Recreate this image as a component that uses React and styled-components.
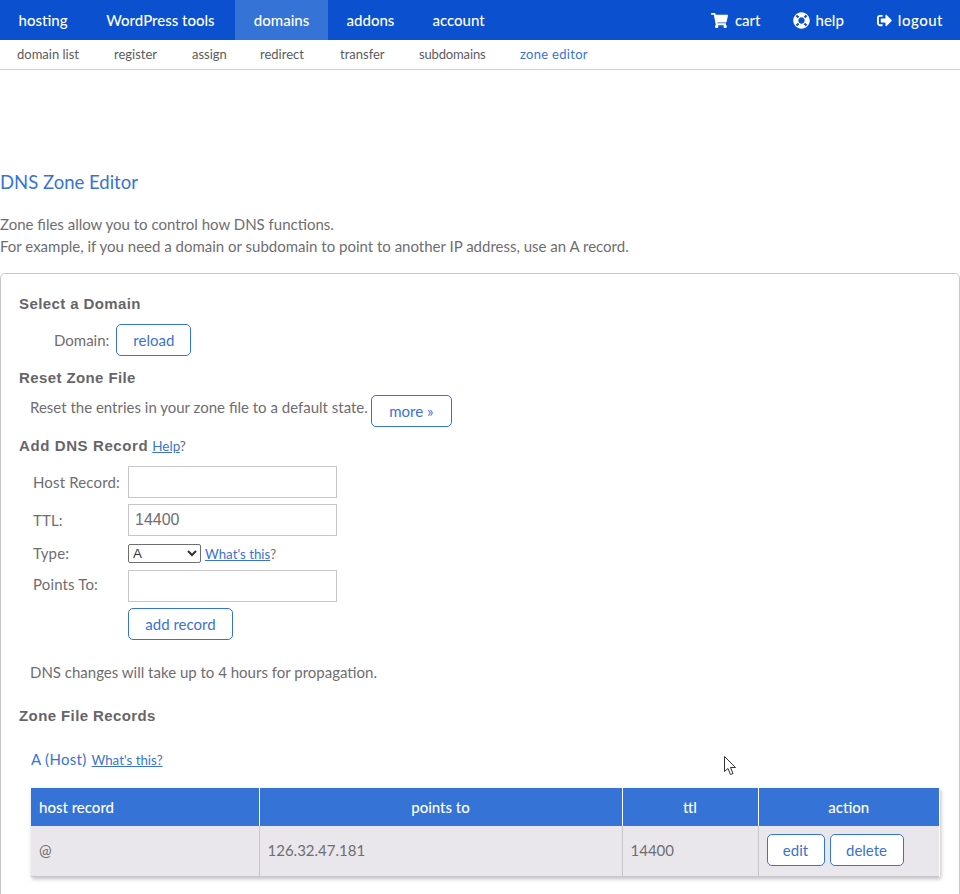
import React from "react";
import styled, { createGlobalStyle } from "styled-components";
import { FaShoppingCart, FaLifeRing, FaSignOutAlt } from "react-icons/fa";

const Global = createGlobalStyle`
  html, body { margin: 0; padding: 0; background: #fff; }
  body { font-family: Lato, "Open Sans", sans-serif; color: #6f6d72; font-size: 15px; overflow: hidden; }
  #root { height: 894px; overflow: hidden; }
`;

const TopBar = styled.nav`
  display: flex; justify-content: space-between; height: 40px; background: #0b50cf;
`;
const NavGroup = styled.div`display: flex;`;
const NavItem = styled.a`
  display: flex; align-items: center; justify-content: center; width: ${p => p.$w}px; height: 40px;
  color: #fff; font-size: 15px; font-weight: 500;
  background: ${p => (p.$active ? "#3673d6" : "transparent")};
`;
const ToolItem = styled.a`
  display: flex; align-items: center; gap: ${p => p.$gap}px; height: 40px; padding: 0 ${p => p.$pad}px;
  color: #fff; font-size: 15px; font-weight: 500; letter-spacing: ${p => p.$track || 0}px;
`;
const SubBar = styled.nav`
  display: flex; box-sizing: content-box; height: 27px; padding: 0 0 2px 17px; border-bottom: 1px solid #cfcfcf; gap: 35px; align-items: center;
`;
const SubItem = styled.a`
  width: ${p => p.$w}px; white-space: nowrap; font-size: 13px; letter-spacing: ${p => p.$track || 0}px;
  color: ${p => (p.$active ? "#3a72d4" : "#5c5a5f")};
`;
const Title = styled.h1`
  margin: 100px 0 0; font-size: 18.5px; line-height: 24px; font-weight: 400; color: #3673d6;
`;
const Intro = styled.p`
  margin: 19px 0 0; font-size: 15px; line-height: 22px;
`;
const Panel = styled.section`
  margin-top: 16px; border: 1px solid #c8c6cc; border-radius: 5px; padding: 20px 19px 24px 18px;
`;
const Heading = styled.h2`
  margin: 0; font-family: "Liberation Sans", Arial, sans-serif; font-size: 15px; line-height: 20px; font-weight: 700; color: #67656a;
  letter-spacing: 0.4px;
`;
const DomainRow = styled.div`
  display: flex; align-items: center; gap: 7px; margin: 10px 0 12px 35px;
`;
const OutlineButton = styled.button`
  height: 32px; padding: 0; width: ${p => p.$w}px; background: #fff;
  border: 1px solid #3673d6; border-radius: 5px; color: #3a72d4; cursor: pointer;
  font-family: inherit; font-size: 15px;
`;
const ResetRow = styled.div`
  display: flex; align-items: flex-start; gap: 3px; margin: 7px 0 0 11px; line-height: 20px;
  & > span { padding-top: 2px; }
`;
const AddHeading = styled(Heading)`
  margin-top: 9px; display: flex; align-items: baseline; gap: 4px; letter-spacing: 0.6px;
`;
const HelpNote = styled.span`
  font-family: Lato, sans-serif; font-weight: 400; font-size: 13.5px; letter-spacing: 0;
`;
const TextLink = styled.a`
  color: #3a72d4; text-decoration: underline;
`;
const FormGrid = styled.div`
  display: grid; grid-template-columns: 95px 209px; align-items: center; row-gap: 6px; margin: 10px 0 0 14px;
`;
const Label = styled.label`
  line-height: 20px; letter-spacing: 0.15px; ${p => p.$up && "margin-top: -4px;"}
`;
const TextInput = styled.input`
  box-sizing: border-box; width: 209px; height: 32px; border: 1px solid #c8c6cc; padding: 0 6px;
  font-family: "Liberation Sans", Arial, sans-serif; font-size: 16px; color: #6f6d72; outline: none;
`;
const TypeCell = styled.div`
  display: flex; align-items: center; gap: 4px; white-space: nowrap; font-size: 13.3px; padding: 2px 0 1px;
`;
const TypeSelect = styled.select`
  width: 73px; height: 19px; font-family: "Liberation Sans", Arial, sans-serif; font-size: 13.33px; color: #333;
  background: #fff; border: 1px solid #6f6f6f; border-radius: 2px; padding: 0;
`;
const Note = styled.p`
  margin: 22px 0 0 11px; line-height: 20px;
`;
const RecordsHeading = styled(Heading)`margin-top: 24px;`;
const Kind = styled.div`
  margin: 23px 0 0 12px; line-height: 20px; color: #3673d6; display: flex; gap: 5px; align-items: baseline;
  letter-spacing: 0.3px;
`;
const SmallLink = styled(TextLink)`font-size: 13.3px; letter-spacing: 0;`;
const TableWrap = styled.div`
  margin: 18px 0 0 12px; box-shadow: 1px 2px 4px rgba(0,0,0,0.25);
`;
const Table = styled.table`
  width: 908px; border-collapse: collapse; table-layout: fixed; background: #e9e7eb;
`;
const Th = styled.th`
  height: 38px; padding: 0 8px; background: #3673d6; color: #fff; font-size: 15px; font-weight: 500;
  text-align: ${p => p.$left ? "left" : "center"};
  border-left: ${p => p.$first ? "none" : "1px solid #fff"};
`;
const Td = styled.td`
  height: 50px; padding: 0 8px 1px; font-size: 15px; border-left: ${p => p.$first ? "none" : "1px solid #c8c6cc"};
  border-bottom: 1px solid #c8c6cc; box-sizing: border-box;
`;
const Actions = styled.div`display: flex; gap: 5px; margin-bottom: 1px;`;
const Pointer = styled.svg`
  position: absolute; left: 724px; top: 756px;
`;

export default function App() {
  return (
    <>
      <Global />
      <TopBar>
        <NavGroup>
          <NavItem $w={86}>hosting</NavItem>
          <NavItem $w={149}>WordPress tools</NavItem>
          <NavItem $w={93} $active>domains</NavItem>
          <NavItem $w={85}>addons</NavItem>
          <NavItem $w={91}>account</NavItem>
        </NavGroup>
        <NavGroup>
          <ToolItem $gap={7} $pad={16}><FaShoppingCart size={17} />cart</ToolItem>
          <ToolItem $gap={6} $pad={16}><FaLifeRing size={17} />help</ToolItem>
          <ToolItem $gap={6} $pad={17} $track={0.5}><FaSignOutAlt size={15} />logout</ToolItem>
        </NavGroup>
      </TopBar>
      <SubBar>
        <SubItem $w={62}>domain list</SubItem>
        <SubItem $w={43}>register</SubItem>
        <SubItem $w={33}>assign</SubItem>
        <SubItem $w={45}>redirect</SubItem>
        <SubItem $w={44}>transfer</SubItem>
        <SubItem $w={66} $track={-0.15}>subdomains</SubItem>
        <SubItem $w={67} $track={0.3} $active>zone editor</SubItem>
      </SubBar>
      <Title>DNS Zone Editor</Title>
      <Intro>
        Zone files allow you to control how DNS functions.<br />
        For example, if you need a domain or subdomain to point to another IP address, use an A record.
      </Intro>
      <Panel>
        <Heading>Select a Domain</Heading>
        <DomainRow>
          <span>Domain:</span>
          <OutlineButton $w={75}>reload</OutlineButton>
        </DomainRow>
        <Heading>Reset Zone File</Heading>
        <ResetRow>
          <span>Reset the entries in your zone file to a default state.</span>
          <OutlineButton $w={81}>more »</OutlineButton>
        </ResetRow>
        <AddHeading>
          Add DNS Record
          <HelpNote><TextLink>Help</TextLink>?</HelpNote>
        </AddHeading>
        <FormGrid>
          <Label>Host Record:</Label>
          <TextInput />
          <Label>TTL:</Label>
          <TextInput defaultValue="14400" />
          <Label>Type:</Label>
          <TypeCell>
            <TypeSelect defaultValue="A"><option>A</option></TypeSelect>
            <span><TextLink>What's this</TextLink>?</span>
          </TypeCell>
          <Label $up>Points To:</Label>
          <TextInput />
          <span />
          <OutlineButton $w={105}>add record</OutlineButton>
        </FormGrid>
        <Note>DNS changes will take up to 4 hours for propagation.</Note>
        <RecordsHeading>Zone File Records</RecordsHeading>
        <Kind>A (Host) <SmallLink>What's this?</SmallLink></Kind>
        <TableWrap>
          <Table>
            <colgroup>
              <col style={{ width: 228 }} />
              <col style={{ width: 363 }} />
              <col style={{ width: 136 }} />
              <col style={{ width: 181 }} />
            </colgroup>
            <thead>
              <tr>
                <Th $first $left>host record</Th>
                <Th>points to</Th>
                <Th>ttl</Th>
                <Th>action</Th>
              </tr>
            </thead>
            <tbody>
              <tr>
                <Td $first>@</Td>
                <Td>126.32.47.181</Td>
                <Td>14400</Td>
                <Td>
                  <Actions>
                    <OutlineButton $w={58}>edit</OutlineButton>
                    <OutlineButton $w={74}>delete</OutlineButton>
                  </Actions>
                </Td>
              </tr>
            </tbody>
          </Table>
        </TableWrap>
      </Panel>
      <Pointer width="13" height="20" viewBox="0 0 13 20">
        <path d="M0.5 0.5 L0.5 15.5 L4 12.5 L6.5 18.5 L9 17.5 L6.5 11.5 L11.5 11.5 Z" fill="#fff" stroke="#333" strokeWidth="1" />
      </Pointer>
    </>
  );
}
